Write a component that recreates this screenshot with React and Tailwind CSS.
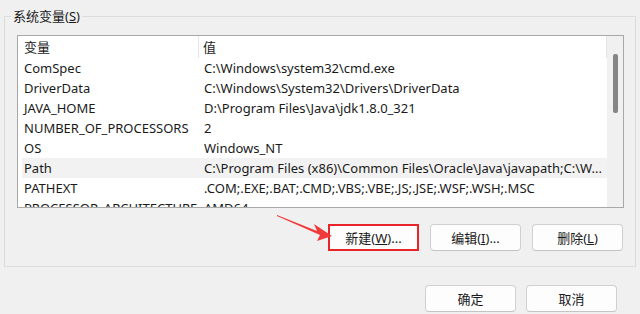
import React from "react";

const font = { fontFamily: '"Segoe UI", "Noto Sans", "Noto Sans CJK SC", sans-serif' };

const rows = [
  ["ComSpec", "C:\\Windows\\system32\\cmd.exe"],
  ["DriverData", "C:\\Windows\\System32\\Drivers\\DriverData"],
  ["JAVA_HOME", "D:\\Program Files\\Java\\jdk1.8.0_321"],
  ["NUMBER_OF_PROCESSORS", "2"],
  ["OS", "Windows_NT"],
  ["Path", "C:\\Program Files (x86)\\Common Files\\Oracle\\Java\\javapath;C:\\W..."],
  ["PATHEXT", ".COM;.EXE;.BAT;.CMD;.VBS;.VBE;.JS;.JSE;.WSF;.WSH;.MSC"],
  ["PROCESSOR_ARCHITECTURE", "AMD64"],
];

function Btn({ children, className = "" }) {
  return (
    <div
      className={
        "w-[91px] h-[27px] flex items-center justify-center rounded-[4px] bg-[#fdfdfd] border border-[#d0d0d0] border-b-[#c4c4c4] text-[13px] leading-[18px] text-[#1a1a1a] " +
        className
      }
    >
      {children}
    </div>
  );
}

export default function App() {
  return (
    <div
      className="w-[640px] h-[314px] bg-[#f0f0f0] overflow-hidden text-[#1a1a1a] text-[13px] leading-[18px]"
      style={font}
    >
      <div className="pt-[16px] pl-[4px] pr-[4px]">
        <div className="relative h-[251px] border border-[#dcdcdc] pl-[12px] pr-[12px] pt-[18px]">
          <div className="absolute left-[6px] top-[-9px] px-[2px] bg-[#f0f0f0] text-[13px] leading-[16px]">
            系统变量(<span className="underline">S</span>)
          </div>
          <div className="w-[607px] h-[173px] border border-[#a8a8a8] bg-white flex overflow-hidden">
            <div className="flex-1 flex flex-col pl-[4px]">
              <div className="h-[22px] flex items-center shrink-0">
                <div className="w-[177px] h-full flex items-center pl-[2px] border-r border-[#e5e5e5]">变量</div>
                <div className="flex-1 h-full flex items-center pl-[4px] border-r border-[#e5e5e5]">值</div>
              </div>
              {rows.map(([k, v]) => (
                <div
                  key={k}
                  className={"h-[20px] flex items-center shrink-0 " + (k === "Path" ? "bg-[#f2f2f2]" : "")}
                >
                  <div className="w-[178px] pl-[2px] whitespace-nowrap leading-[20px]">{k}</div>
                  <div className="flex-1 pl-[4px] whitespace-nowrap leading-[20px]">{v}</div>
                </div>
              ))}
            </div>
            <div className="w-[16px] bg-[#f0f0f0] flex justify-center pt-[18px]">
              <div className="w-[5px] h-[59px] rounded-[2px] bg-[#858585] ml-[1px]" />
            </div>
          </div>
          <div className="flex justify-end gap-[11px] mt-[16px] pr-[0px]">
            <div className="relative">
              <Btn>
                新建(<span className="underline">W</span>)...
              </Btn>
              <div className="absolute inset-0 border-2 border-[#e8232a]" />
            </div>
            <Btn className="border-[#1f75cf] border-b-[#1f75cf]">
              编辑(<span className="underline">I</span>)...
            </Btn>
            <Btn>
              删除(<span className="underline">L</span>)
            </Btn>
          </div>
          <svg className="absolute left-[268px] top-[195px]" width="70" height="40" viewBox="0 0 70 40">
            <path d="M4 3 L44 19 L41 12 L59 24 L44 29 L47 23 L4 4 Z" fill="#f03a3a" />
          </svg>
        </div>
      </div>
      <div className="flex justify-end gap-[10px] pr-[23px] mt-[18px]">
        <Btn>确定</Btn>
        <Btn>取消</Btn>
      </div>
    </div>
  );
}
